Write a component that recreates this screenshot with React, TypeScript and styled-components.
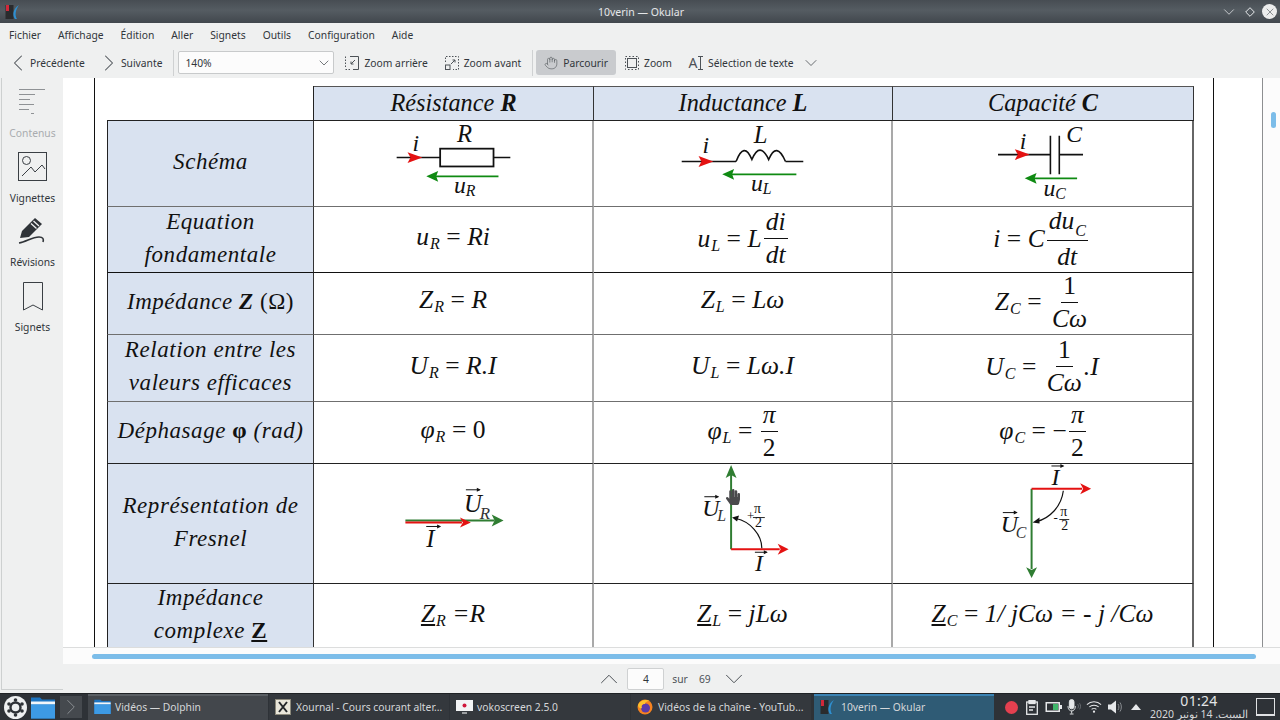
import React from "react";
import styled, { createGlobalStyle } from "styled-components";
import { ChevronDown, ChevronLeft, ChevronRight, ChevronUp, Hand, X } from "lucide-react";
import { FaHandPaper } from "react-icons/fa";

const GlobalStyle = createGlobalStyle`
  html, body {
    margin: 0;
    padding: 0;
    width: 1280px;
    height: 720px;
    overflow: hidden;
    background: #eff0f0;
  }
  * { box-sizing: border-box; }
`;

const UI_FONT = `"Noto Sans", "Open Sans", sans-serif`;
const MATH_FONT = `"Liberation Serif", "DejaVu Serif", serif`;

const Screen = styled.div`
  width: 1280px;
  height: 720px;
  display: flex;
  flex-direction: column;
  font-family: ${UI_FONT};
  font-size: 10.3px;
  color: #31363b;
`;

/* window chrome */
const TitleBar = styled.div`
  height: 23px;
  flex: none;
  display: grid;
  grid-template-columns: 1fr auto 1fr;
  align-items: center;
  padding: 0 3px 0 5px;
  background: linear-gradient(180deg, #474d53 0%, #555c62 45%, #41474d 100%);
  color: #e4e6e8;
  font-size: 10.5px;
`;

const TitleControls = styled.div`
  display: flex;
  justify-content: flex-end;
  align-items: center;
  gap: 7px;
  color: #e8eaec;
`;

const CloseDot = styled.span`
  width: 15px;
  height: 15px;
  border-radius: 50%;
  background: #eceded;
  color: #4a5056;
  display: flex;
  align-items: center;
  justify-content: center;
`;

const MenuBar = styled.div`
  height: 24px;
  flex: none;
  display: flex;
  align-items: center;
  gap: 17px;
  padding-left: 9px;
  background: #eff0f0;
`;

const Toolbar = styled.div`
  height: 31px;
  flex: none;
  display: flex;
  align-items: center;
  padding-left: 3px;
  background: #eff0f0;
`;

const ToolButton = styled.div<{ $active?: boolean }>`
  height: 25px;
  display: flex;
  align-items: center;
  gap: 5px;
  padding: 0 8px;
  border-radius: 3px;
  background: ${(p) => (p.$active ? "#c9cbce" : "transparent")};

  & + & {
    margin-left: 1px;
  }
`;

const ToolGlyph = styled.span`
  width: 14px;
  height: 14px;
  flex: none;
  display: flex;
  align-items: center;
  justify-content: center;
  color: #4d5257;

  svg {
    flex: none;
  }
`;

const ToolSep = styled.div`
  width: 1px;
  height: 26px;
  margin: 0 3px;
  background: #cfd1d2;
`;

const Combo = styled.div`
  width: 156px;
  height: 23px;
  margin: 0 3px 0 1px;
  display: flex;
  align-items: center;
  justify-content: space-between;
  padding: 0 1px 0 6px;
  background: #fcfcfc;
  border: 1px solid #c8cacb;
  border-radius: 2px;
`;

const SelectLetter = styled.span`
  font-size: 14px;
  line-height: 14px;
  display: flex;
  align-items: center;
  gap: 1px;
`;

const OverflowChevron = styled(ChevronDown)`
  margin-left: -1px;
  color: #4d5257;
`;

/* main area */
const Body = styled.div`
  flex: 1;
  min-height: 0;
  display: flex;
`;

const Sidebar = styled.div`
  width: 63px;
  height: 612px;
  flex: none;
  margin-left: 1px;
  display: flex;
  flex-direction: column;
  align-items: center;
  gap: 10.7px;
  padding-top: 8px;
  background: #eff0f0;
  border: 1px solid #cdd0d0;
  border-top: none;
`;

const SideItem = styled.div<{ $muted?: boolean }>`
  display: flex;
  flex-direction: column;
  align-items: center;
  gap: 8px;
  color: ${(p) => (p.$muted ? "#a9acaf" : "#31363b")};
`;

const SideIcon = styled.div`
  width: 32px;
  height: 32px;
  display: flex;
  align-items: center;
  justify-content: center;
`;

const SideLabel = styled.div`
  line-height: 14px;
`;

const MainColumn = styled.div`
  flex: 1;
  min-width: 0;
  margin-left: -1px;
  display: flex;
  flex-direction: column;
`;

const View = styled.div`
  height: 569px;
  flex: none;
  position: relative;
  overflow: hidden;
  display: flex;
  background: #ffffff;
`;

const Sheet = styled.div`
  width: 1120px;
  margin-left: 31px;
  flex: none;
  padding: 8px 0 0 12px;
  background: #ffffff;
  border-left: 1px solid #111;
  border-right: 1px solid #111;
`;

const VScroll = styled.div`
  width: 18px;
  margin-left: auto;
  flex: none;
  padding: 34px 0 0 8px;
  background: #fcfcfc;
  border-left: 1px solid #8d8f91;
`;

const VThumb = styled.div`
  width: 5px;
  height: 16px;
  border-radius: 3px;
  background: #7cbde9;
`;

const HandCursor = styled.div`
  position: absolute;
  left: 662px;
  top: 411px;
  color: #4a4a4c;
  line-height: 0;
`;

const HScroll = styled.div`
  height: 17px;
  flex: none;
  padding: 6px 24px 0 29px;
  background: #fcfcfc;
  border-top: 1px solid #dcdddd;
`;

const HThumb = styled.div`
  height: 5px;
  border-radius: 3px;
  background: #7cbde9;
`;

const PageNav = styled.div`
  height: 29px;
  flex: none;
  display: flex;
  align-items: center;
  justify-content: center;
  background: #eff0f0;
  color: #4d5257;

  svg {
    flex: none;
    margin: 0 -7px;
  }
`;

const PageInput = styled.div`
  width: 37px;
  height: 22px;
  margin: 0 8px 0 10px;
  display: flex;
  align-items: center;
  justify-content: center;
  background: #fcfcfc;
  border: 1px solid #cfd1d2;
  border-radius: 2px;
  color: #31363b;
`;

const PageTotal = styled.span`
  margin: 0 15px 0 11px;
`;

/* table */
const Table = styled.div`
  width: 1087px;
  display: grid;
  grid-template-columns: 207px 280px 299px 301px;
  grid-template-rows: 35px 86px 66px 62px 67px 62px 120px 64px;
  font-family: ${MATH_FONT};
  color: #111;
`;

const Cell = styled.div<{ $line?: string; $side?: string }>`
  display: flex;
  flex-direction: column;
  align-items: center;
  justify-content: center;
  min-width: 0;
  border-bottom: 1px solid ${(p) => p.$line || "#6f6f6f"};
  border-right: 2px solid ${(p) => p.$side || "#a9a9a9"};
`;

const Corner = styled.div`
  border-bottom: 1px solid #222;
  border-right: 1px solid #222;
`;

const HeadCell = styled(Cell)`
  background: #d9e2f0;
  border-top: 1px solid #555;
  border-right: 1px solid #333;
  padding-bottom: 2px;
  font-size: 24.3px;
  font-style: italic;
`;

const RowHead = styled(Cell)`
  background: #d9e2f0;
  border-left: 1.5px solid #222;
  border-right: 1px solid #333;
  padding-bottom: 4px;
  font-size: 23px;
  font-style: italic;
  letter-spacing: 0.55px;
  line-height: 33px;
  text-align: center;
`;

const Strong = styled.b<{ $upright?: boolean; $under?: boolean }>`
  font-style: ${(p) => (p.$upright ? "normal" : "italic")};
  text-decoration: ${(p) => (p.$under ? "underline" : "none")};
`;

const Upright = styled.span`
  font-style: normal;
`;

const Formula = styled.div<{ $dx?: number; $dy?: number }>`
  display: flex;
  align-items: center;
  white-space: pre;
  font-size: 25.5px;
  font-style: italic;
  margin-left: ${(p) => p.$dx || 0}px;
  margin-top: ${(p) => p.$dy || 0}px;
`;

const Sub = styled.span`
  font-size: 16px;
  position: relative;
  top: 7px;
  margin-left: 1px;
`;

const Eq = styled.span`
  font-style: normal;
  margin: 0 6.5px;
`;

const Frac = styled.span`
  display: inline-flex;
  flex-direction: column;
  align-items: center;
  line-height: 30px;
  margin-left: 2px;
`;

const FracTop = styled.span`
  padding: 0 2px 1px;
  border-bottom: 1.5px solid #111;
`;

const FracBottom = styled.span`
  padding: 1px 2px 0;
`;

const Diagram = styled.svg`
  display: block;
  width: 100%;
  height: 100%;
  overflow: visible;
  font-family: ${MATH_FONT};
  font-style: italic;
  fill: #111;
`;

/* task bar */
const TaskBar = styled.div`
  height: 27px;
  flex: none;
  display: flex;
  align-items: center;
  padding-left: 4px;
  background: #2e3237;
  border-top: 1px solid #1f2225;
  color: #d5d7d9;
`;

const Launcher = styled.div`
  width: 23px;
  height: 23px;
  margin-right: 4px;
  flex: none;
`;

const Pager = styled.div`
  width: 22px;
  height: 22px;
  margin: 0 6px 0 2px;
  flex: none;
  display: flex;
  align-items: center;
  justify-content: center;
  background: #45494e;
  color: #8b8f93;

  svg {
    flex: none;
  }
`;

const Task = styled.div<{ $state?: "open" | "active" | "idle"; $gap?: number }>`
  width: 180px;
  height: 26px;
  flex: none;
  display: flex;
  align-items: center;
  gap: 4px;
  padding: 0 0 3px 5px;
  margin-right: ${(p) => p.$gap ?? 1}px;
  white-space: nowrap;
  overflow: hidden;
  background: ${(p) => (p.$state === "active" ? "#2f5b75" : p.$state === "open" ? "#43474c" : "#34383d")};
  border-top: 2px solid ${(p) => (p.$state === "active" ? "#3b83b4" : p.$state === "open" ? "#5a5f64" : "#34383d")};
`;

const TaskIcon = styled.span`
  width: 18px;
  height: 18px;
  flex: none;
  display: flex;
  align-items: center;
  justify-content: center;
`;

const Tray = styled.div`
  margin-left: 9px;
  flex: 1;
  display: flex;
  align-items: center;
  gap: 5px;
`;

const TrayIcon = styled.span<{ $w?: number }>`
  width: ${(p) => p.$w || 16}px;
  height: 18px;
  flex: none;
  display: flex;
  align-items: center;
  justify-content: center;
`;

const Clock = styled.div`
  width: 100px;
  flex: none;
  display: flex;
  flex-direction: column;
  align-items: center;
`;

const ClockTime = styled.div`
  font-size: 14px;
  line-height: 14px;
  letter-spacing: 0.3px;
  color: #e2e4e6;
`;

const ClockDate = styled.div`
  font-size: 10.5px;
  line-height: 12px;
  white-space: nowrap;
`;

const ShowDesktop = styled.div`
  width: 19px;
  height: 18px;
  margin-left: 2px;
  flex: none;
  border: 1px solid #e0e2e4;
  border-bottom-width: 2px;
`;

/* small drawings */
const OkularLogo = ({ size = 16 }: { size?: number }) => (
  <svg width={size} height={size} viewBox="0 0 16 16">
    <rect x="0.5" y="1" width="8" height="14" fill="#2a2b2d" />
    <rect x="1" y="1" width="3" height="6" fill="#d2283a" />
    <path d="M14 1 C8 5 7 11 10 15 L12 15 C9.5 11 10.5 6 14 1Z" fill="#2f8fd0" />
  </svg>
);

const FolderIcon = ({ w, h }: { w: number; h: number }) => (
  <svg width={w} height={h} viewBox="0 0 24 22">
    <path d="M0 1 H9 L11 3 H24 V22 H0Z" fill="#1d74c0" />
    <rect x="0" y="5" width="24" height="3" fill="#f2f6fa" />
    <rect x="0" y="8" width="24" height="14" fill="#3d9ae4" />
  </svg>
);

const ZoomOutIcon = () => (
  <svg width="14" height="14" viewBox="0 0 14 14" fill="none" stroke="currentColor">
    <path d="M5 .5H13.5V13.5H8" />
    <path d="M.5 .5V12.5M.5 13.5H5" strokeDasharray="1.5 1.5" />
    <path d="M10 4 6 8M6 5.5V8H8.5" />
  </svg>
);

const ZoomInIcon = () => (
  <svg width="14" height="14" viewBox="0 0 14 14" fill="none" stroke="currentColor">
    <rect x=".5" y="9" width="4.5" height="4.5" />
    <path d="M.5 6V.5H13.5V13.5H8" strokeDasharray="1.5 1.5" />
    <path d="M6 8 10 4M7.5 4H10V6.5" />
  </svg>
);

const ZoomAreaIcon = () => (
  <svg width="14" height="14" viewBox="0 0 14 14" fill="none" stroke="currentColor">
    <rect x="2.5" y="2.5" width="9" height="9" />
    <path d="M0.5 0.5H13.5V13.5H0.5Z" strokeDasharray="1.5 2" />
  </svg>
);

const TextBeam = () => (
  <svg width="5" height="14" viewBox="0 0 5 14" fill="none" stroke="currentColor">
    <path d="M0 .5H5M2.5 .5V13.5M0 13.5H5" />
  </svg>
);

const TocIcon = () => (
  <svg width="27" height="26" viewBox="0 0 27 26" stroke="#8f9295" strokeWidth="1">
    <path d="M0 .5H26M0 5.5H16M0 10.5H11M0 15.5H15M0 20.5H10M12 24.5H15" />
  </svg>
);

const ThumbIcon = () => (
  <svg width="29" height="29" viewBox="0 0 29 29" fill="none" stroke="#3a3f44">
    <rect x=".5" y=".5" width="28" height="28" />
    <circle cx="8.5" cy="8.5" r="4" />
    <path d="M4 24 13 15 17 20 24 13 27 17" />
  </svg>
);

const ReviewIcon = () => (
  <svg width="28" height="28" viewBox="0 0 28 28">
    <path d="M17 1 24 7 11 20 2 21 4 14Z" fill="#2f3338" />
    <path d="M15.5 4 21 9M13 6.5 18.5 11.5" stroke="#eff0f0" strokeWidth="1.3" />
    <path d="M1 26C8 25 14 20 21 20 25 20 26 22 25 25" fill="none" stroke="#2f3338" strokeWidth="1.6" />
  </svg>
);

const BookmarkIcon = () => (
  <svg width="20" height="29" viewBox="0 0 20 29" fill="none" stroke="#3a3f44">
    <path d="M.5 .5H19.5V28L10 23 .5 28Z" />
  </svg>
);

const KdeLogo = () => (
  <svg width="23" height="23" viewBox="0 0 23 23">
    <circle cx="11.5" cy="11.5" r="11.5" fill="#eef0f1" />
    <circle cx="11.5" cy="11.5" r="5" fill="none" stroke="#2e3237" strokeWidth="2.4" />
    <circle cx="11.5" cy="4" r="1.8" fill="#2e3237" />
    <circle cx="18" cy="8" r="1.8" fill="#2e3237" />
    <circle cx="18" cy="15" r="1.8" fill="#2e3237" />
    <circle cx="11.5" cy="19" r="1.8" fill="#2e3237" />
    <circle cx="5" cy="15" r="1.8" fill="#2e3237" />
    <circle cx="5" cy="8" r="1.8" fill="#2e3237" />
  </svg>
);

const XournalIcon = () => (
  <svg width="16" height="16" viewBox="0 0 16 16">
    <rect x=".5" y=".5" width="15" height="15" fill="#e9e6da" stroke="#8d8a7c" />
    <path d="M4 3 12 13M12 3 4 13" stroke="#23262a" strokeWidth="2" />
  </svg>
);

const VokoIcon = () => (
  <svg width="17" height="16" viewBox="0 0 17 16">
    <rect x="0" y="1" width="17" height="11" fill="#f3f4f5" />
    <circle cx="8.5" cy="6.5" r="2" fill="#d0183c" />
    <rect x="6" y="13" width="5" height="2" fill="#9a9da0" />
  </svg>
);

const FirefoxIcon = () => (
  <svg width="16" height="16" viewBox="0 0 16 16">
    <circle cx="8" cy="8" r="7.5" fill="#f58220" />
    <circle cx="8.5" cy="9" r="4.5" fill="#5a3aa8" />
    <path d="M1 6C3 1 9 0 13 2 9 2 8 4 8 5 5 5 4 7 5 9 3 10 1 8 1 6Z" fill="#fbc02d" />
  </svg>
);

const ClipboardIcon = () => (
  <svg width="12" height="15" viewBox="0 0 12 15" fill="none" stroke="#e6e8ea" strokeWidth="1.3">
    <rect x=".7" y="2" width="10.6" height="12.3" />
    <rect x="3" y=".5" width="6" height="3" fill="#e6e8ea" />
    <path d="M3 7H9M3 10H7" />
  </svg>
);

const BatteryIcon = () => (
  <svg width="17" height="12" viewBox="0 0 17 12">
    <rect x=".5" y="1" width="14.5" height="10" fill="#e6e8ea" />
    <rect x="2" y="2.5" width="11.5" height="7" fill="#2e3237" />
    <rect x="8" y="3" width="5" height="6" fill="#3fb56a" />
    <rect x="15" y="4" width="2" height="4" fill="#e6e8ea" />
  </svg>
);

const MicIcon = () => (
  <svg width="15" height="16" viewBox="0 0 15 16" fill="none" stroke="#e6e8ea">
    <rect x="2.5" y="0" width="5" height="10" rx="2.5" fill="#e6e8ea" />
    <path d="M1 7C1 14 9 14 9 7M5 12V15M3 15.5H7" />
    <path d="M11.5 5C12.5 6.5 12.5 8 11.5 9.5M13.5 4C14.8 6 14.8 8.5 13.5 10.5" stroke="#6d7175" />
  </svg>
);

const WifiIcon = () => (
  <svg width="17" height="14" viewBox="0 0 17 14" fill="none" stroke="#e6e8ea" strokeWidth="1.1">
    <path d="M1 4.5C5 .5 12 .5 16 4.5M3.5 7C6 4.5 11 4.5 13.5 7M6 9.5C7.3 8.3 9.7 8.3 11 9.5" />
    <circle cx="8.5" cy="12" r="1.2" fill="#e6e8ea" stroke="none" />
  </svg>
);

const SpeakerIcon = () => (
  <svg width="14" height="14" viewBox="0 0 14 14" fill="none" stroke="#8b8f93">
    <path d="M0 4.5H3L8 .5V13.5L3 9.5H0Z" fill="#e6e8ea" stroke="none" />
    <path d="M10 4C11.2 5.8 11.2 8.2 10 10M12 2.5C13.8 5 13.8 9 12 11.5" />
  </svg>
);

const TrayUp = () => (
  <svg width="10" height="6" viewBox="0 0 10 6">
    <path d="M5 0 10 6H0Z" fill="#e6e8ea" />
  </svg>
);

const Vec = ({ x, y, w = 14 }: { x: number; y: number; w?: number }) => (
  <g stroke="#111" strokeWidth="1" fill="#111">
    <path d={`M${x} ${y}H${x + w}`} />
    <path d={`M${x + w + 1} ${y}l-4 -2v4Z`} stroke="none" />
  </g>
);

const Wire = styled.path`
  stroke: #111;
  stroke-width: 1.6;
  fill: none;
`;

const RED = "#e41212";
const CURRENT_GREEN = "#0f8a12";
const VEC_GREEN = "#2f7d32";

const App = () => {
  return (
    <Screen>
      <GlobalStyle />
      <TitleBar>
        <OkularLogo />
        <span>10verin — Okular</span>
        <TitleControls>
          <ChevronDown size={18} strokeWidth={1} />
          <svg width="10" height="10" viewBox="0 0 10 10" fill="none" stroke="currentColor">
            <path d="M5 .7 9.3 5 5 9.3 .7 5Z" />
          </svg>
          <CloseDot>
            <X size={12} strokeWidth={1.2} />
          </CloseDot>
        </TitleControls>
      </TitleBar>

      <MenuBar>
        <span>Fichier</span>
        <span>Affichage</span>
        <span>Édition</span>
        <span>Aller</span>
        <span>Signets</span>
        <span>Outils</span>
        <span>Configuration</span>
        <span>Aide</span>
      </MenuBar>

      <Toolbar>
        <ToolButton>
          <ToolGlyph>
            <ChevronLeft size={28} strokeWidth={0.9} />
          </ToolGlyph>
          Précédente
        </ToolButton>
        <ToolButton>
          <ToolGlyph>
            <ChevronRight size={28} strokeWidth={0.9} />
          </ToolGlyph>
          Suivante
        </ToolButton>
        <ToolSep />
        <Combo>
          140%
          <ChevronDown size={16} strokeWidth={1} />
        </Combo>
        <ToolButton>
          <ToolGlyph>
            <ZoomOutIcon />
          </ToolGlyph>
          Zoom arrière
        </ToolButton>
        <ToolButton>
          <ToolGlyph>
            <ZoomInIcon />
          </ToolGlyph>
          Zoom avant
        </ToolButton>
        <ToolSep />
        <ToolButton $active>
          <ToolGlyph>
            <Hand size={14} strokeWidth={1} />
          </ToolGlyph>
          Parcourir
        </ToolButton>
        <ToolButton>
          <ToolGlyph>
            <ZoomAreaIcon />
          </ToolGlyph>
          Zoom
        </ToolButton>
        <ToolButton>
          <ToolGlyph>
            <SelectLetter>
              A
              <TextBeam />
            </SelectLetter>
          </ToolGlyph>
          Sélection de texte
        </ToolButton>
        <OverflowChevron size={20} strokeWidth={1} />
      </Toolbar>

      <Body>
        <Sidebar>
          <SideItem $muted>
            <SideIcon>
              <TocIcon />
            </SideIcon>
            <SideLabel>Contenus</SideLabel>
          </SideItem>
          <SideItem>
            <SideIcon>
              <ThumbIcon />
            </SideIcon>
            <SideLabel>Vignettes</SideLabel>
          </SideItem>
          <SideItem>
            <SideIcon>
              <ReviewIcon />
            </SideIcon>
            <SideLabel>Révisions</SideLabel>
          </SideItem>
          <SideItem>
            <SideIcon>
              <BookmarkIcon />
            </SideIcon>
            <SideLabel>Signets</SideLabel>
          </SideItem>
        </Sidebar>

        <MainColumn>
          <View>
            <Sheet>
              <Table>
                <Corner />
                <HeadCell $line="#222">
                  <span>
                    Résistance <Strong>R</Strong>
                  </span>
                </HeadCell>
                <HeadCell $line="#222">
                  <span>
                    Inductance <Strong>L</Strong>
                  </span>
                </HeadCell>
                <HeadCell $line="#222">
                  <span>
                    Capacité <Strong>C</Strong>
                  </span>
                </HeadCell>

                <RowHead>Schéma</RowHead>
                <Cell>
                  <Diagram viewBox="314 121 280 86">
                    <Wire d="M397 158H441M495 158H512" />
                    <rect x="441" y="149" width="54" height="18" fill="none" stroke="#111" strokeWidth="1.8" />
                    <path d="M408 152.5 423 158 408 163.5 411 158Z" fill={RED} />
                    <text x="413" y="151" fontSize="24">i</text>
                    <text x="458" y="142" fontSize="25">R</text>
                    <path d="M500 177H435" stroke={CURRENT_GREEN} strokeWidth="1.8" />
                    <path d="M427 177 439 171.5 437 177 439 182.5Z" fill={CURRENT_GREEN} />
                    <text x="455" y="194" fontSize="24">u</text>
                    <text x="467" y="197" fontSize="16">R</text>
                  </Diagram>
                </Cell>
                <Cell>
                  <Diagram viewBox="594 121 299 86">
                    <Wire d="M682 162H737M787 162H805" />
                    <Wire d="M737 162Q745 141 753 160Q761 141 770 160Q778 141 787 162" />
                    <path d="M699 156.5 714 162 699 167.5 702 162Z" fill={RED} />
                    <text x="703" y="153" fontSize="24">i</text>
                    <text x="755" y="143" fontSize="25">L</text>
                    <path d="M798 175H732" stroke={CURRENT_GREEN} strokeWidth="1.8" />
                    <path d="M723 175 735 169.5 733 175 735 180.5Z" fill={CURRENT_GREEN} />
                    <text x="752" y="192" fontSize="24">u</text>
                    <text x="764" y="195" fontSize="16">L</text>
                  </Diagram>
                </Cell>
                <Cell $side="#666">
                  <Diagram viewBox="893 121 300 86">
                    <Wire d="M998 155H1051M1060 155H1084M1051 136V175M1060 136V175" />
                    <path d="M1015 149.5 1030 155 1015 160.5 1018 155Z" fill={RED} />
                    <text x="1020" y="149" fontSize="24">i</text>
                    <text x="1067" y="142" fontSize="24">C</text>
                    <path d="M1078 179H1034" stroke={CURRENT_GREEN} strokeWidth="1.8" />
                    <path d="M1025 179 1037 173.5 1035 179 1037 184.5Z" fill={CURRENT_GREEN} />
                    <text x="1044" y="197" fontSize="24">u</text>
                    <text x="1056" y="200" fontSize="16">C</text>
                  </Diagram>
                </Cell>

                <RowHead $line="#111">
                  <span>Equation</span>
                  <span>fondamentale</span>
                </RowHead>
                <Cell $line="#111">
                  <Formula $dy={-5}>
                    u<Sub>R</Sub>
                    <Eq>=</Eq>Ri
                  </Formula>
                </Cell>
                <Cell $line="#111">
                  <Formula $dy={-2}>
                    u<Sub>L</Sub>
                    <Eq>=</Eq>L
                    <Frac>
                      <FracTop>di</FracTop>
                      <FracBottom>dt</FracBottom>
                    </Frac>
                  </Formula>
                </Cell>
                <Cell $line="#111" $side="#666">
                  <Formula $dx={-4} $dy={-2}>
                    i<Eq>=</Eq>C
                    <Frac>
                      <FracTop>
                        du<Sub>C</Sub>
                      </FracTop>
                      <FracBottom>dt</FracBottom>
                    </Frac>
                  </Formula>
                </Cell>

                <RowHead>
                  <span>
                    Impédance <Strong>Z</Strong> <Upright>(Ω)</Upright>
                  </span>
                </RowHead>
                <Cell>
                  <Formula $dy={-7}>
                    Z<Sub>R</Sub>
                    <Eq>=</Eq>R
                  </Formula>
                </Cell>
                <Cell>
                  <Formula $dy={-7}>
                    Z<Sub>L</Sub>
                    <Eq>=</Eq>Lω
                  </Formula>
                </Cell>
                <Cell $side="#666">
                  <Formula $dx={-1} $dy={-3}>
                    Z<Sub>C</Sub>
                    <Eq>=</Eq>
                    <Frac>
                      <FracTop>
                        <Upright>1</Upright>
                      </FracTop>
                      <FracBottom>Cω</FracBottom>
                    </Frac>
                  </Formula>
                </Cell>

                <RowHead>
                  <span>Relation entre les</span>
                  <span>valeurs efficaces</span>
                </RowHead>
                <Cell>
                  <Formula $dy={-5}>
                    U<Sub>R</Sub>
                    <Eq>=</Eq>R.I
                  </Formula>
                </Cell>
                <Cell>
                  <Formula $dy={-5}>
                    U<Sub>L</Sub>
                    <Eq>=</Eq>Lω.I
                  </Formula>
                </Cell>
                <Cell $side="#666">
                  <Formula $dx={-1} $dy={-3}>
                    U<Sub>C</Sub>
                    <Eq>=</Eq>
                    <Frac>
                      <FracTop>
                        <Upright>1</Upright>
                      </FracTop>
                      <FracBottom>Cω</FracBottom>
                    </Frac>
                    .I
                  </Formula>
                </Cell>

                <RowHead $line="#222">
                  <span>
                    Déphasage <Strong $upright>φ</Strong> (rad)
                  </span>
                </RowHead>
                <Cell $line="#222">
                  <Formula $dy={-6}>
                    φ<Sub>R</Sub>
                    <Eq>=</Eq>
                    <Upright>0</Upright>
                  </Formula>
                </Cell>
                <Cell $line="#222">
                  <Formula $dy={-3}>
                    φ<Sub>L</Sub>
                    <Eq>=</Eq>
                    <Frac>
                      <FracTop>π</FracTop>
                      <FracBottom>
                        <Upright>2</Upright>
                      </FracBottom>
                    </Frac>
                  </Formula>
                </Cell>
                <Cell $line="#222" $side="#666">
                  <Formula $dy={-3}>
                    φ<Sub>C</Sub>
                    <Eq>=</Eq>
                    <Upright>−</Upright>
                    <Frac>
                      <FracTop>π</FracTop>
                      <FracBottom>
                        <Upright>2</Upright>
                      </FracBottom>
                    </Frac>
                  </Formula>
                </Cell>

                <RowHead $line="#222">
                  <span>Représentation de</span>
                  <span>Fresnel</span>
                </RowHead>
                <Cell $line="#222">
                  <Diagram viewBox="314 464 280 120">
                    <path d="M406 521H496" stroke={VEC_GREEN} strokeWidth="2" />
                    <path d="M493 515 505 521 493 527 496 521Z" fill={VEC_GREEN} />
                    <path d="M406 523H463" stroke={RED} strokeWidth="2" />
                    <path d="M461 518 472 523 461 528 464 523Z" fill={RED} />
                    <Vec x={467} y={490} />
                    <text x="465" y="512" fontSize="25">U</text>
                    <text x="481" y="519" fontSize="17" fill="#333">R</text>
                    <Vec x={427} y={527} />
                    <text x="427" y="548" fontSize="25">I</text>
                  </Diagram>
                </Cell>
                <Cell $line="#222">
                  <Diagram viewBox="594 464 299 120">
                    <path d="M732 550V475" stroke={VEC_GREEN} strokeWidth="2" />
                    <path d="M726.500 478 732 465 737.500 478 732 475Z" fill={VEC_GREEN} />
                    <path d="M732 550H781" stroke={RED} strokeWidth="2" />
                    <path d="M779 544.500 790 550 779 555.500 782 550Z" fill={RED} />
                    <path d="M763 549C763 535 751 522 737 519" stroke="#111" strokeWidth="1.2" fill="none" />
                    <path d="M733 518 740 516 738 522Z" fill="#111" />
                    <Vec x={705} y={497} />
                    <text x="703" y="516" fontSize="24">U</text>
                    <text x="718" y="521" fontSize="16" fill="#333">L</text>
                    <text x="748" y="520" fontSize="13" fontStyle="normal">+</text>
                    <text x="755" y="513" fontSize="14" fontStyle="normal">π</text>
                    <path d="M754 518H766" stroke="#111" strokeWidth="0.9" />
                    <text x="756" y="528" fontSize="14" fontStyle="normal">2</text>
                    <Vec x={756} y={553} w={12} />
                    <text x="756" y="572" fontSize="24">I</text>
                  </Diagram>
                </Cell>
                <Cell $line="#222" $side="#666">
                  <Diagram viewBox="893 464 300 120">
                    <path d="M1032 489V570" stroke={VEC_GREEN} strokeWidth="2" />
                    <path d="M1026.500 568 1032 579 1037.500 568 1032 571Z" fill={VEC_GREEN} />
                    <path d="M1032 489H1083" stroke={RED} strokeWidth="2" />
                    <path d="M1081 483.500 1092 489 1081 494.500 1084 489Z" fill={RED} />
                    <path d="M1064 491C1062 507 1050 519 1037 522" stroke="#111" strokeWidth="1.2" fill="none" />
                    <path d="M1033 523 1040 518 1040 524Z" fill="#111" />
                    <Vec x={1052} y={466} w={12} />
                    <text x="1052" y="485" fontSize="24">I</text>
                    <Vec x={1003} y={513} />
                    <text x="1001" y="533" fontSize="24">U</text>
                    <text x="1016" y="539" fontSize="16" fill="#333">C</text>
                    <text x="1054" y="522" fontSize="13" fontStyle="normal">-</text>
                    <text x="1061" y="516" fontSize="14" fontStyle="normal">π</text>
                    <path d="M1060 520H1070" stroke="#111" strokeWidth="0.9" />
                    <text x="1062" y="531" fontSize="14" fontStyle="normal">2</text>
                  </Diagram>
                </Cell>

                <RowHead $line="#222">
                  <span>Impédance</span>
                  <span>
                    complexe <Strong $upright $under>Z</Strong>
                  </span>
                </RowHead>
                <Cell $line="#222">
                  <Formula $dy={-3}>
                    <u>Z</u>
                    <Sub>R</Sub> =R
                  </Formula>
                </Cell>
                <Cell $line="#222">
                  <Formula $dy={-3}>
                    <u>Z</u>
                    <Sub>L</Sub>
                    <Eq>=</Eq>jLω
                  </Formula>
                </Cell>
                <Cell $line="#222" $side="#666">
                  <Formula $dy={-3}>
                    <u>Z</u>
                    <Sub>C</Sub>
                    <Eq>=</Eq>1/ jCω = - j /Cω
                  </Formula>
                </Cell>
              </Table>
            </Sheet>
            <VScroll>
              <VThumb />
            </VScroll>
            <HandCursor>
              <FaHandPaper size={16} />
            </HandCursor>
          </View>

          <HScroll>
            <HThumb />
          </HScroll>

          <PageNav>
            <ChevronUp size={30} strokeWidth={0.8} />
            <PageInput>4</PageInput>
            <span>sur</span>
            <PageTotal>69</PageTotal>
            <ChevronDown size={30} strokeWidth={0.8} />
          </PageNav>
        </MainColumn>
      </Body>

      <TaskBar>
        <Launcher>
          <KdeLogo />
        </Launcher>
        <Launcher>
          <FolderIcon w={24} h={23} />
        </Launcher>
        <Pager>
          <ChevronRight size={26} strokeWidth={0.9} />
        </Pager>
        <Task $state="open">
          <TaskIcon>
            <FolderIcon w={17} h={15} />
          </TaskIcon>
          Vidéos — Dolphin
        </Task>
        <Task>
          <TaskIcon>
            <XournalIcon />
          </TaskIcon>
          Xournal - Cours courant alter...
        </Task>
        <Task>
          <TaskIcon>
            <VokoIcon />
          </TaskIcon>
          vokoscreen 2.5.0
        </Task>
        <Task $gap={3}>
          <TaskIcon>
            <FirefoxIcon />
          </TaskIcon>
          Vidéos de la chaîne - YouTub...
        </Task>
        <Task $state="active" $gap={0}>
          <TaskIcon>
            <OkularLogo />
          </TaskIcon>
          10verin — Okular
        </Task>
        <Tray>
          <TrayIcon>
            <svg width="13" height="13" viewBox="0 0 13 13">
              <circle cx="6.500" cy="6.500" r="6.500" fill="#e5404f" />
            </svg>
          </TrayIcon>
          <TrayIcon>
            <ClipboardIcon />
          </TrayIcon>
          <TrayIcon $w={17}>
            <BatteryIcon />
          </TrayIcon>
          <TrayIcon $w={14}>
            <MicIcon />
          </TrayIcon>
          <TrayIcon>
            <WifiIcon />
          </TrayIcon>
          <TrayIcon>
            <SpeakerIcon />
          </TrayIcon>
          <TrayIcon>
            <TrayUp />
          </TrayIcon>
          <Clock>
            <ClockTime>01:24</ClockTime>
            <ClockDate dir="rtl">السبت. 14 نونبر 2020</ClockDate>
          </Clock>
          <ShowDesktop />
        </Tray>
      </TaskBar>
    </Screen>
  );
};

export default App;
